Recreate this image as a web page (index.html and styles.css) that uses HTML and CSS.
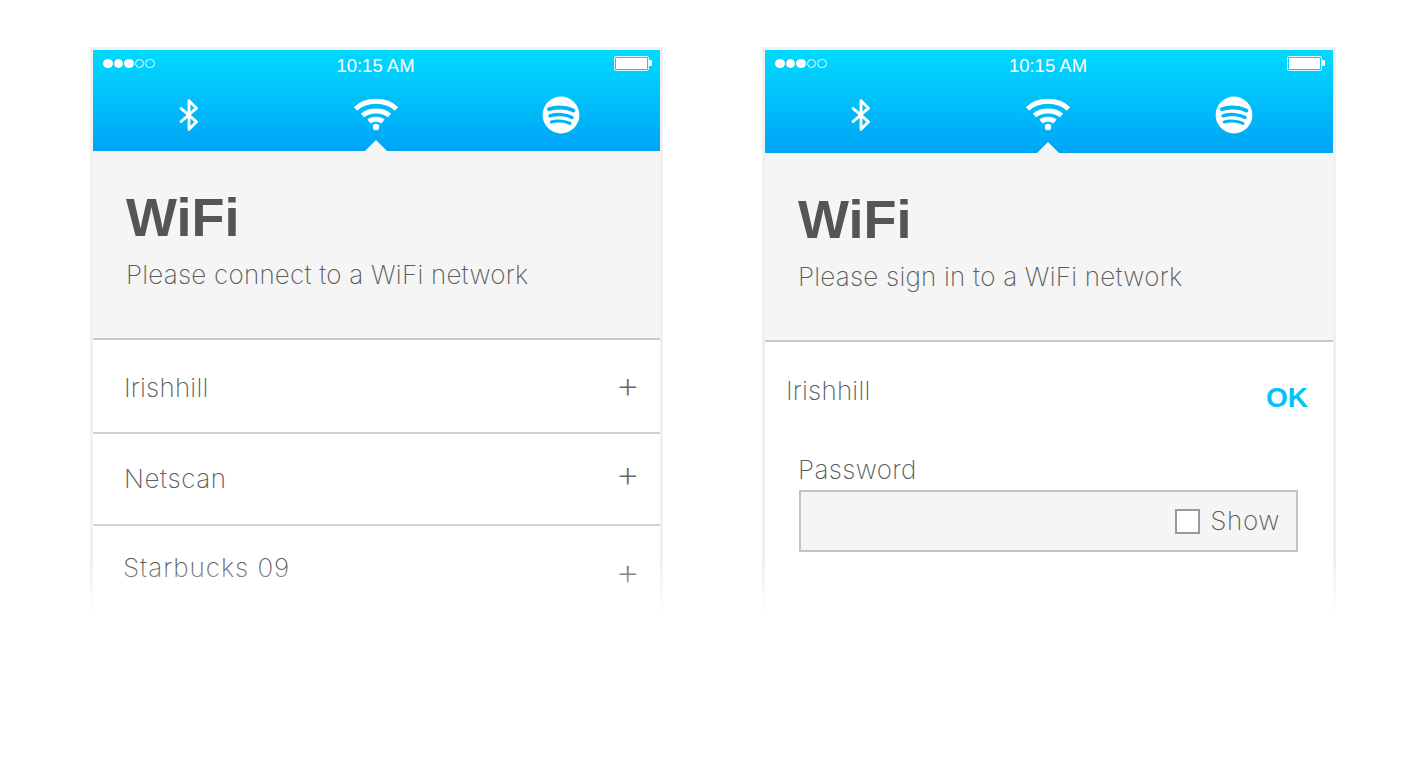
FILE: index.html
```html
<!DOCTYPE html>
<html lang="en">
<head>
<meta charset="utf-8">
<title>WiFi</title>
<link rel="stylesheet" href="styles.css">
</head>
<body>
<svg class="defs" width="0" height="0" aria-hidden="true">
  <symbol id="bt" viewBox="0 0 20 32">
    <path d="M2.2 9.5 L17.5 22.8 L10 30.2 L10 1.8 L17.5 9.2 L2.2 22.5" fill="none" stroke="#fff" stroke-width="2.9" stroke-linejoin="round" stroke-linecap="round"/>
  </symbol>
  <symbol id="wifi" viewBox="0 0 46 34">
    <g fill="none" stroke="#fff" stroke-width="5">
      <path d="M2.5 12 C13 1.8 33 1.8 43.5 12"/>
      <path d="M9.5 18.5 C16 12.5 30 12.5 36.5 18.5"/>
      <path d="M16 24.5 C19.5 21.5 26.5 21.5 30 24.5"/>
    </g>
    <circle cx="23" cy="30" r="3.2" fill="#fff"/>
  </symbol>
  <symbol id="spot" viewBox="0 0 38 38">
    <circle cx="19" cy="19" r="18.4" fill="#fff"/>
    <g fill="none" stroke="#00b4f8" stroke-linecap="round">
      <path d="M6.8 13.2 C14 10.6 25 11 31.5 14.6" stroke-width="3.8"/>
      <path d="M8 19.8 C14.5 17.8 24 18.2 30 21.4" stroke-width="3.4"/>
      <path d="M9.3 26 C15 24.4 23 24.8 28 27.4" stroke-width="3"/>
    </g>
  </symbol>
</svg>
<main class="stage">
  <section class="phone">
    <div class="screen">
      <header class="top">
        <div class="status">
          <div class="dots"><i class="on"></i><i class="on"></i><i class="on"></i><i></i><i></i></div>
          <div class="time">10:15 AM</div>
          <div class="battery"><b></b></div>
        </div>
        <nav class="tabs">
          <svg class="ic-bt"><use href="#bt"/></svg>
          <svg class="ic-wifi"><use href="#wifi"/></svg>
          <svg class="ic-spot"><use href="#spot"/></svg>
        </nav>
      </header>
      <div class="intro">
        <h1>WiFi</h1>
        <p>Please connect to a WiFi network</p>
      </div>
      <ul class="list">
        <li class="r1"><span>Irishhill</span><em>+</em></li>
        <li class="r2"><span>Netscan</span><em>+</em></li>
        <li class="r3"><span>Starbucks 09</span><em>+</em></li>
      </ul>
    </div>
  </section>
  <section class="phone second">
    <div class="screen">
      <header class="top">
        <div class="status">
          <div class="dots"><i class="on"></i><i class="on"></i><i class="on"></i><i></i><i></i></div>
          <div class="time">10:15 AM</div>
          <div class="battery"><b></b></div>
        </div>
        <nav class="tabs">
          <svg class="ic-bt"><use href="#bt"/></svg>
          <svg class="ic-wifi"><use href="#wifi"/></svg>
          <svg class="ic-spot"><use href="#spot"/></svg>
        </nav>
      </header>
      <div class="intro">
        <h1>WiFi</h1>
        <p>Please sign in to a WiFi network</p>
      </div>
      <div class="form">
        <div class="form-head"><span>Irishhill</span><strong>OK</strong></div>
        <label class="lbl">Password</label>
        <div class="field"><i class="check"></i><span>Show</span></div>
      </div>
    </div>
  </section>
</main>
</body>
</html>
```
FILE: styles.css
```css
* { box-sizing: border-box; }
html, body { margin: 0; padding: 0; background: #fff; }
body { height: 772px; overflow: hidden; font-family: "Inter", "Liberation Sans", sans-serif; font-weight: 250; color: #5c5c5c; }
.defs { position: absolute; }
.stage { display: flex; gap: 99px; padding: 47px 0 0 90px; }
.phone { position: relative; flex: none; width: 573px; height: 567px; padding: 3px 3px 0; background: #f1f1f1; overflow: hidden; }
.phone::after { content: ""; position: absolute; left: 0; right: 0; bottom: 0; height: 50px; background: linear-gradient(rgba(255,255,255,0), #fff); }
.phone.second { width: 574px; }
.screen { height: 100%; background: #fff; overflow: hidden; }
.top { height: 101px; background: linear-gradient(#00daff, #00a5f6); position: relative; }
.second .top { height: 103px; }
.status { display: grid; grid-template-columns: 1fr auto 1fr; align-items: center; height: 29px; padding: 0 11px 0 10px; color: #fff; }
.dots { display: flex; gap: 1px; margin-top: -2px; }
.dots i { width: 9.5px; height: 9.5px; border-radius: 50%; border: 1px solid rgba(255,255,255,.9); }
.dots i.on { background: #fff; border-color: #fff; }
.time { font-family: "Liberation Sans", sans-serif; font-weight: 400; font-size: 18.5px; line-height: 27px; padding-top: 2px; margin-left: -1px; }
.battery { position: relative; justify-self: end; width: 35px; height: 15px; margin-top: -2px; border: 1px solid rgba(255,255,255,.85); border-radius: 2px; padding: 1px; }
.battery b { display: block; height: 100%; background: #fff; }
.battery::after { content: ""; position: absolute; right: -4px; top: 3px; width: 3px; height: 6px; background: #fff; border-radius: 0 1px 1px 0; }
.tabs { display: grid; grid-template-columns: 1fr 1fr 1fr; justify-items: center; position: relative; height: 72px; }
.tabs svg { display: block; }
.ic-bt { width: 20px; height: 32px; margin: 20px 0 0 3px; }
.ic-wifi { width: 46px; height: 34px; margin: 18px 0 0 -2px; }
.ic-spot { width: 38px; height: 38px; margin: 17px 0 0 -9px; }
.top::after { content: ""; position: absolute; left: 50%; bottom: 0; margin-left: -12px; border: 11px solid transparent; border-top: 0; border-bottom-color: #f5f5f5; }
.intro { background: #f5f5f5; height: 189px; padding: 33px 33px 0; border-bottom: 2px solid #c9c9c9; }
h1 { margin: 0; font-family: "Liberation Sans", sans-serif; font-weight: 700; font-size: 54px; line-height: 66px; color: #555; }
.intro p { margin: 7px 0 0; font-size: 26px; line-height: 36px; letter-spacing: .22px; }
.list { list-style: none; margin: 0; padding: 0; }
.list li { display: flex; justify-content: space-between; padding: 0 20px 0 31px; border-bottom: 2px solid #d0d0d0; font-size: 26px; }
.list li.r1 { height: 94px; padding-top: 32px; letter-spacing: .2px; }
.list li.r2 { height: 92px; padding-top: 29px; letter-spacing: .6px; }
.list li.r3 { height: 90px; padding-top: 26px; border: 0; letter-spacing: .95px; }
.list .r3 span { margin-left: -1px; }
.list em { font-style: normal; font-size: 38px; line-height: 38px; margin-top: -7px; color: #666; letter-spacing: 0; }
.list .r2 em { margin-top: -9px; }
.list .r3 em { margin-top: 0; }
.form { padding: 31px 34px 0; }
.form-head { display: flex; justify-content: space-between; margin-left: -13px; font-size: 26px; line-height: 36px; letter-spacing: .2px; }
.form-head strong { font-family: "Liberation Sans", sans-serif; font-weight: 700; font-size: 28px; color: #00c4f8; margin: 7px -9px 0 0; letter-spacing: 0; }
.lbl { display: block; margin: 37px 0 0 -1px; font-size: 26px; line-height: 34px; letter-spacing: .35px; }
.field { display: flex; justify-content: flex-end; align-items: center; gap: 10px; height: 62px; width: 499px; margin-top: 3px; padding-right: 16px; background: #f5f5f5; border: 2px solid #c4c4c4; font-size: 26px; }
.field span { letter-spacing: .6px; margin-top: -2px; }
.check { width: 25px; height: 25px; background: #fff; border: 2px solid #999; }
```
